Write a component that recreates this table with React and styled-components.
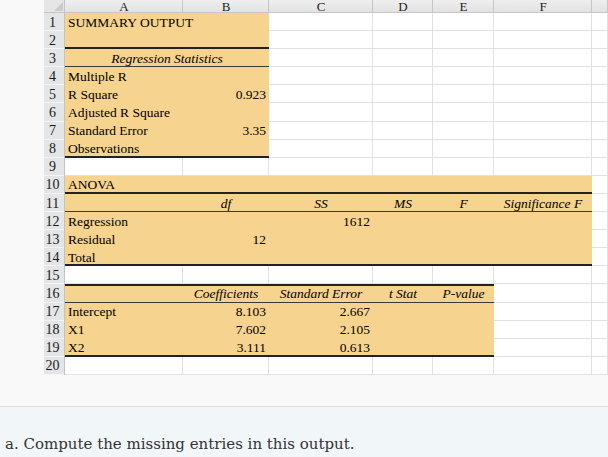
import React from 'react';
import styled, { createGlobalStyle, css } from 'styled-components';

const GlobalStyle = createGlobalStyle`
  html, body {
    margin: 0;
    padding: 0;
    background: #f9f9f9;
  }
`;

const Page = styled.div`
  width: 608px;
  height: 457px;
  overflow: hidden;
  display: flex;
  flex-direction: column;
`;

const Workspace = styled.div`
  background: #f9f9f9;
  padding: 0 0 31px 44px;
`;

const Sheet = styled.div`
  display: grid;
  grid-template-columns: 21px 118px 86px 104px 60px 61px 98px 1fr;
  grid-template-rows: 13px repeat(20, 18.1px);
  font-family: "Liberation Serif", "Times New Roman", serif;
  font-size: 13.5px;
  color: #000;
  background: #fff;
`;

const Corner = styled.div`
  position: relative;
  background: #e6e6e6;
  box-shadow: inset -1px -1px 0 #c4c4c4;

  &::after {
    content: '';
    position: absolute;
    right: 2px;
    bottom: 2px;
    border-style: solid;
    border-width: 0 0 9px 9px;
    border-color: transparent transparent #cbcbcb transparent;
  }
`;

const ColHead = styled.div`
  display: flex;
  align-items: flex-end;
  justify-content: center;
  line-height: 13px;
  font-size: 13px;
  color: #222;
  background: linear-gradient(#eeeeee, #e2e2e2);
  box-shadow: inset -1px -1px 0 #c6c6c6;
`;

const RowHead = styled.div`
  display: flex;
  align-items: flex-end;
  justify-content: center;
  padding: 0 4px 1.5px 0;
  line-height: 15px;
  font-size: 14px;
  color: #1a1a1a;
  background: #e4e5e7;
  box-shadow: inset -1px 0 0 #c2c2c2, inset 0 -1px 0 #f4f4f4;
`;

const lines = {
  thick: '2px',
  thin: '1px',
};

const Cell = styled.div`
  grid-column: span ${(p) => p.$span || 1};
  display: flex;
  align-items: flex-end;
  justify-content: ${(p) =>
    p.$align === 'right' ? 'flex-end' : p.$align === 'center' ? 'center' : 'flex-start'};
  padding: 0 3px 1.5px;
  line-height: 15px;
  white-space: nowrap;
  font-style: ${(p) => (p.$italic ? 'italic' : 'normal')};
  background: ${(p) => (p.$fill ? '#f6d38f' : '#ffffff')};
  ${(p) => {
    if (!p.$fill) return css`box-shadow: inset -1px -1px 0 #e1e1e1;`;
    const shadows = [];
    if (p.$top) shadows.push(`inset 0 ${lines[p.$top]} 0 #222`);
    if (p.$bottom) shadows.push(`inset 0 -${lines[p.$bottom]} 0 ${p.$bottom === 'thick' ? '#222' : '#3a3a3a'}`);
    return shadows.length ? css`box-shadow: ${shadows.join(', ')};` : '';
  }}
`;

const Question = styled.div`
  flex: 1;
  border-top: 1px solid #dedede;
  background: #f1f6f9;
  padding: 28px 5px 0;
  font-family: "DejaVu Serif", serif;
  font-size: 15px;
  color: #333;
`;

const columns = ['A', 'B', 'C', 'D', 'E', 'F', ''];

const f = (text, extra = {}) => ({ text, fill: true, ...extra });
const h = (text) => f(text, { italic: true, align: 'center' });
const num = (text) => f(text, { align: 'right' });

const withLine = (cells, key, value) => cells.map((c) => ({ ...c, [key]: value }));

const rows = [
  [f('SUMMARY OUTPUT', { span: 2 })],
  [f('', { span: 2, bottom: 'thick' })],
  [f('Regression Statistics', { span: 2, italic: true, align: 'center', bottom: 'thin' })],
  [f('Multiple R'), f('')],
  [f('R Square'), num('0.923')],
  [f('Adjusted R Square'), f('')],
  [f('Standard Error'), num('3.35')],
  withLine([f('Observations'), f('')], 'bottom', 'thick'),
  [],
  withLine([f('ANOVA'), f(''), f(''), f(''), f(''), f('')], 'bottom', 'thick'),
  withLine([f(''), h('df'), h('SS'), h('MS'), h('F'), h('Significance F')], 'bottom', 'thin'),
  [f('Regression'), f(''), num('1612'), f(''), f(''), f('')],
  [f('Residual'), num('12'), f(''), f(''), f(''), f('')],
  withLine([f('Total'), f(''), f(''), f(''), f(''), f('')], 'bottom', 'thick'),
  [],
  withLine(
    withLine([f(''), h('Coefficients'), h('Standard Error'), h('t Stat'), h('P-value')], 'top', 'thick'),
    'bottom',
    'thin'
  ),
  [f('Intercept'), num('8.103'), num('2.667'), f(''), f('')],
  [f('X1'), num('7.602'), num('2.105'), f(''), f('')],
  withLine([f('X2'), num('3.111'), num('0.613'), f(''), f('')], 'bottom', 'thick'),
  [],
];

function fillRow(cells) {
  const used = cells.reduce((sum, c) => sum + (c.span || 1), 0);
  const blanks = Array.from({ length: 7 - used }, () => ({ text: '' }));
  return [...cells, ...blanks];
}

export default function App() {
  return (
    <Page>
      <GlobalStyle />
      <Workspace>
        <Sheet>
          <Corner />
          {columns.map((c, i) => (
            <ColHead key={i}>{c}</ColHead>
          ))}
          {rows.map((cells, r) => (
            <React.Fragment key={r}>
              <RowHead>{r + 1}</RowHead>
              {fillRow(cells).map((c, i) => (
                <Cell
                  key={i}
                  $span={c.span}
                  $fill={c.fill}
                  $align={c.align}
                  $italic={c.italic}
                  $top={c.top}
                  $bottom={c.bottom}
                >
                  {c.text}
                </Cell>
              ))}
            </React.Fragment>
          ))}
        </Sheet>
      </Workspace>
      <Question>a. Compute the missing entries in this output.</Question>
    </Page>
  );
}
